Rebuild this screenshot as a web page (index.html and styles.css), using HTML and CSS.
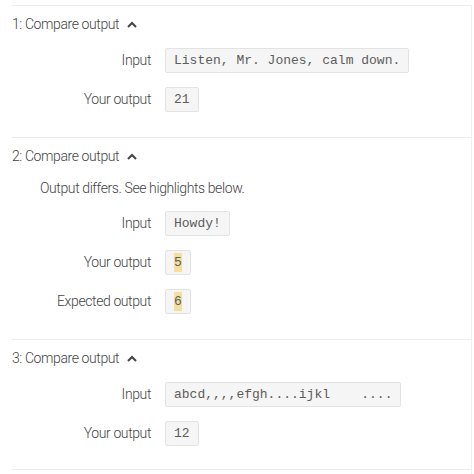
FILE: index.html
```html
<!DOCTYPE html>
<html>
<head>
<meta charset="utf-8">
<link rel="stylesheet" href="styles.css">
</head>
<body>
<div class="list">
  <section class="test">
    <div class="test-header">1: Compare output <svg class="chev" width="10" height="7" viewBox="0 0 10 7"><path d="M1 6 L5 2 L9 6" fill="none" stroke="#444" stroke-width="2"/></svg></div>
    <div class="rows">
      <div class="label">Input</div><div class="val"><span class="box">Listen, Mr. Jones, calm down.</span></div>
      <div class="label">Your output</div><div class="val"><span class="box">21</span></div>
    </div>
  </section>
  <section class="test">
    <div class="test-header">2: Compare output <svg class="chev" width="10" height="7" viewBox="0 0 10 7"><path d="M1 6 L5 2 L9 6" fill="none" stroke="#444" stroke-width="2"/></svg></div>
    <div class="msg">Output differs. See highlights below.</div>
    <div class="rows">
      <div class="label">Input</div><div class="val"><span class="box">Howdy!</span></div>
      <div class="label">Your output</div><div class="val"><span class="box"><span class="hl">5</span></span></div>
      <div class="label">Expected output</div><div class="val"><span class="box"><span class="hl">6</span></span></div>
    </div>
  </section>
  <section class="test last">
    <div class="test-header">3: Compare output <svg class="chev" width="10" height="7" viewBox="0 0 10 7"><path d="M1 6 L5 2 L9 6" fill="none" stroke="#444" stroke-width="2"/></svg></div>
    <div class="rows">
      <div class="label">Input</div><div class="val"><span class="box">abcd,,,,efgh....ijkl    ....</span></div>
      <div class="label">Your output</div><div class="val"><span class="box">12</span></div>
    </div>
  </section>
  <div class="end"></div>
</div>
</body>
</html>
```

FILE: styles.css
```css
html, body {
  margin: 0;
  padding: 0;
  background: #ffffff;
}
body {
  font-family: Roboto, "Liberation Sans", sans-serif;
  color: #555555;
}
.list {
  margin: 5px 0 0 12px;
  width: 459px;
  border-right: 1px solid #f0f0f0;
}
.test {
  border-top: 1px solid #ececec;
  padding: 8px 0 25px 0;
}
.test.last {
  padding-bottom: 23px;
}
.end {
  border-top: 1px solid #ececec;
  height: 10px;
}
.test-header,
.msg,
.label {
  font-size: 14px;
  font-weight: 300;
  letter-spacing: -0.4px;
  color: #444444;
}
.test-header {
  line-height: 21px;
  height: 21px;
  display: flex;
  align-items: center;
  gap: 8px;
}
.chev {
  display: block;
  margin-top: -1px;
}
.msg {
  line-height: 20px;
  margin: 11px 0 0 28px;
}
.rows {
  display: grid;
  grid-template-columns: 139px auto;
  column-gap: 14px;
  row-gap: 14px;
  margin-top: 13px;
  align-items: center;
}
.label {
  text-align: right;
  line-height: 25px;
}
.val {
  display: flex;
}
.box {
  display: inline-block;
  font-family: "Liberation Mono", "Courier New", monospace;
  font-size: 13px;
  line-height: 23px;
  height: 23px;
  padding: 0 8px;
  background: #f5f5f5;
  border: 1px solid #e3e3e3;
  border-radius: 2px;
  color: #5c5c5c;
  white-space: pre;
}
.hl {
  background: #f3e0a0;
  display: inline-block;
  line-height: 19px;
}
```
